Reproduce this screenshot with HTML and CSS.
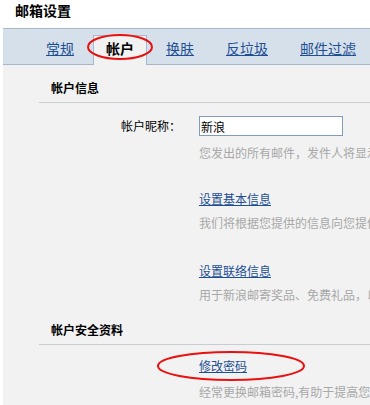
FILE: index.html
```html
<!DOCTYPE html>
<html lang="zh-CN">
<head>
    <meta charset="UTF-8">
    <meta name="viewport" content="width=device-width, initial-scale=1.0">
    <title>邮箱设置</title>
    <link rel="stylesheet" href="styles.css">
</head>
<body>

    <h1 class="titulo">邮箱设置</h1>

    <!-- Abas -->
    <div class="abas">
        <a class="aba" href="#">常规</a>
        <a class="aba ativa" href="#">帐户</a>
        <a class="aba" href="#">换肤</a>
        <a class="aba" href="#">反垃圾</a>
        <a class="aba" href="#">邮件过滤</a>
    </div>

    <div class="conteudo">
        <!-- 帐户信息 -->
        <h2 class="secao">帐户信息</h2>

        <div class="linha primeira">
            <div class="rotulo">帐户昵称：</div>
            <div class="campo">
                <input type="text" class="entrada" value="新浪">
                <p class="dica">您发出的所有邮件，发件人将显示为该昵称</p>
            </div>
        </div>

        <div class="campo recuo item-base">
            <a class="link" href="#">设置基本信息</a>
            <p class="dica perto">我们将根据您提供的信息向您提供更好的服务</p>
        </div>

        <div class="campo recuo item-contato">
            <a class="link" href="#">设置联络信息</a>
            <p class="dica perto">用于新浪邮寄奖品、免费礼品，以便及时联系您</p>
        </div>

        <!-- 帐户安全资料 -->
        <h2 class="secao segunda">帐户安全资料</h2>

        <div class="campo recuo item-senha">
            <a class="link" href="#">修改密码</a>
            <p class="dica">经常更换邮箱密码,有助于提高您的邮箱安全</p>
        </div>
    </div>

    <svg class="marcas" width="370" height="405" viewBox="0 0 370 405">
        <ellipse cx="120" cy="47" rx="32" ry="12" fill="none" stroke="#ea1010" stroke-width="2"/>
        <ellipse cx="231" cy="366" rx="73" ry="14" fill="none" stroke="#ea1010" stroke-width="2"/>
    </svg>

</body>
</html>
```

FILE: styles.css
```css
* { margin: 0; padding: 0; box-sizing: border-box; }
html, body { height: 100%; overflow: hidden; }
body { position: relative; background: #fff; color: #000; font-family: "Noto Sans CJK SC", "Noto Sans", sans-serif; font-size: 12px; line-height: 20px; }

.titulo { height: 28px; padding-left: 15px; font-size: 14px; font-weight: bold; line-height: 20px; }

.abas { margin-left: 3px; height: 37px; padding-left: 30px; display: flex; align-items: flex-end; gap: 6px; background: #d6e0ea; border-top: 1px solid #a7b8ca; border-bottom: 1px solid #a7b8ca; }
.aba { height: 30px; margin-bottom: -1px; padding: 0 12px; border: 1px solid transparent; border-bottom: none; font-size: 14px; line-height: 24px; color: #1d4f94; white-space: nowrap; }
.aba.ativa { background: #f2f2f2; border-color: #a7b8ca; color: #000; font-weight: bold; text-decoration: none; }

.conteudo { margin-left: 3px; min-height: calc(100vh - 65px); padding-left: 36px; background: #f2f2f2; white-space: nowrap; overflow: hidden; }

.secao { padding: 13px 0 4px 12px; font-size: 12px; font-weight: bold; line-height: 20px; border-bottom: 1px solid #c8ccd4; }
.secao.segunda { margin-top: 2px; }

.linha { display: flex; }
.linha.primeira { margin-top: 13px; }
.rotulo { flex-shrink: 0; width: 160px; padding-right: 18px; text-align: right; }
.recuo { margin-left: 160px; }

.entrada { display: block; width: 144px; height: 20px; padding: 0 1px; border: 1px solid #7f9db9; background: #fff; font-family: inherit; font-size: 12px; color: #000; outline: none; }

.link { color: #1d4f94; }
.dica { margin-top: 7px; color: #a8a8a8; }
.dica.perto { margin-top: 4px; }
.item-base { margin-top: 26px; }
.item-contato { margin-top: 28px; }
.item-senha { margin-top: 11px; }
.item-senha .dica { margin-top: 6px; }

.marcas { position: absolute; left: 0; top: 0; pointer-events: none; }
```
